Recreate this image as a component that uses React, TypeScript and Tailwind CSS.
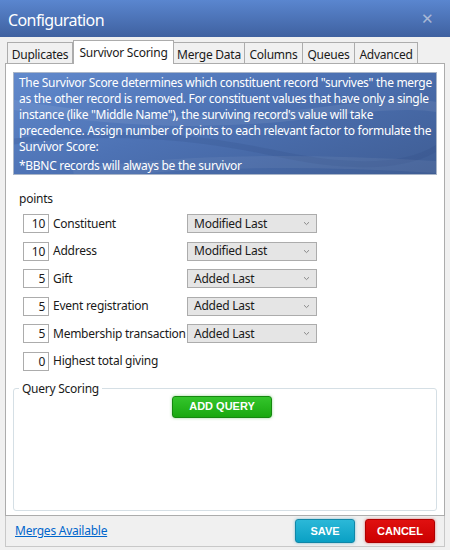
import React from "react";

const ROWS = [
  { pts: "10", label: "Constituent", sel: "Modified Last" },
  { pts: "10", label: "Address", sel: "Modified Last" },
  { pts: "5", label: "Gift", sel: "Added Last" },
  { pts: "5", label: "Event registration", sel: "Added Last" },
  { pts: "5", label: "Membership transaction", sel: "Added Last" },
  { pts: "0", label: "Highest total giving", sel: null },
];

const TABS = [
  { name: "Duplicates", w: "w-[66px]" },
  { name: "Survivor Scoring", w: "w-[101px]", active: true },
  { name: "Merge Data", w: "w-[72px]" },
  { name: "Columns", w: "w-[59px]" },
  { name: "Queues", w: "w-[53px]" },
  { name: "Advanced", w: "w-[64px]" },
];

const INTRO = [
  'The Survivor Score determines which constituent record "survives" the merge',
  "as the other record is removed. For constituent values that have only a single",
  'instance (like "Middle Name"), the surviving record\'s value will take',
  "precedence. Assign number of points to each relevant factor to formulate the",
  "Survivor Score:",
];

function Chevron() {
  return (
    <svg width="7" height="5" viewBox="0 0 7 5" className="text-[#8a8a8a]">
      <path d="M1 1.2 L3.5 3.6 L6 1.2" fill="none" stroke="currentColor" strokeWidth="1" />
    </svg>
  );
}

export default function App() {
  return (
    <div className="w-[450px] h-[550px] bg-[#f0f0f0] flex flex-col text-[12px] tracking-[-0.25px] text-[#1a1a1a] font-['Noto_Sans',sans-serif] overflow-hidden">
      {/* Title bar */}
      <div className="h-[37px] shrink-0 flex items-center justify-between pl-[8px] pr-[16px] bg-[linear-gradient(to_bottom,#5a86cf,#3f61a0)]">
        <span className="text-white text-[16px] tracking-[-0.6px] leading-none pt-[3px]">Configuration</span>
        <span className="text-[#a9b8d6] text-[15px] leading-none">✕</span>
      </div>

      <div className="flex-1 flex flex-col px-[5px]">
        {/* Tabs */}
        <div className="h-[24px] mt-[2px] flex items-end pl-[2px] relative z-10">
          {TABS.map((t) =>
            t.active ? (
              <div
                key={t.name}
                className={`${t.w} h-[24px] -mb-px bg-white border border-b-0 border-[#acacac] flex items-center justify-center pt-[1px]`}
              >
                {t.name}
              </div>
            ) : (
              <div
                key={t.name}
                className={`${t.w} h-[21px] bg-[#f0f0f0] border border-b-0 border-[#acacac] -ml-px first:ml-0 flex items-center justify-center pt-[3px]`}
              >
                {t.name}
              </div>
            )
          )}
        </div>

        {/* Panel */}
        <div className="h-[453px] bg-white border border-[#acacac] flex flex-col px-[7px] pt-[8px]">
          <div className="relative overflow-hidden h-[103px] border border-[#a9b5c8] bg-[linear-gradient(160deg,#6189cc_0%,#4d72b4_45%,#3f5d94_100%)] text-white pl-[5px] pt-[2px] text-[12px] tracking-[-0.3px] leading-[16px] whitespace-nowrap">
            <svg className="absolute inset-0 pointer-events-none" width="424" height="103" viewBox="0 0 424 103">
              <path d="M-10 30 Q 150 60 300 40 T 440 50" fill="none" stroke="#ffffff" strokeOpacity="0.07" strokeWidth="10" />
              <path d="M-10 70 Q 120 50 260 80 T 440 60" fill="none" stroke="#2c4a80" strokeOpacity="0.18" strokeWidth="6" />
              <path d="M60 103 Q 200 80 440 95" fill="none" stroke="#ffffff" strokeOpacity="0.06" strokeWidth="12" />
            </svg>
            <div className="relative">
              {INTRO.map((line) => (
                <div key={line}>{line}</div>
              ))}
            </div>
            <p className="relative mt-[3px]">*BBNC records will always be the survivor</p>
          </div>

          <div className="mt-[18px] ml-[6px] leading-none">points</div>

          <div className="mt-[9px] ml-[10px] flex flex-col gap-[8.5px]">
            {ROWS.map((r) => (
              <div key={r.label} className="h-[19px] flex items-center">
                <div className="w-[26px] h-[19px] border border-[#acacac] bg-white text-right pr-[3px] leading-[17px]">
                  {r.pts}
                </div>
                <div className="w-[138px] pl-[4px] whitespace-nowrap">{r.label}</div>
                {r.sel && (
                  <div className="w-[130px] h-[19px] border border-[#acacac] bg-[#e5e5e5] flex items-center justify-between pl-[6px] pr-[6px]">
                    <span>{r.sel}</span>
                    <Chevron />
                  </div>
                )}
              </div>
            ))}
          </div>

          <fieldset className="mt-[12px] h-[128px] border border-[#d5dfe5] rounded-[3px] px-0">
            <legend className="ml-[5px] px-[3px] leading-none">Query Scoring</legend>
            <button className="ml-[158px] mt-[1px] w-[100px] h-[22px] rounded-[3px] border border-[#15880f] bg-[linear-gradient(to_bottom,#34c52c,#19a80f)] shadow-[0_0_3px_rgba(40,170,30,0.5)] text-white font-bold text-[11px] tracking-normal font-['Liberation_Sans',sans-serif]">
              ADD QUERY
            </button>
          </fieldset>
        </div>

        {/* Footer */}
        <div className="h-[31px] border border-t-0 border-[#c8c8c8] flex items-center justify-between pl-[9px] pr-[9px]">
          <a className="text-[#0066cc] underline text-[12px]">Merges Available</a>
          <div className="flex gap-[10px]">
            <button className="w-[60px] h-[24px] rounded-[3px] border border-[#1187a8] bg-[linear-gradient(to_bottom,#2bb8d8,#0aa0c4)] shadow-[0_0_3px_rgba(10,140,180,0.5)] text-white font-bold text-[11px] tracking-normal font-['Liberation_Sans',sans-serif]">
              SAVE
            </button>
            <button className="w-[70px] h-[24px] rounded-[3px] border border-[#b00000] bg-[linear-gradient(to_bottom,#e01010,#cc0000)] shadow-[0_0_3px_rgba(200,0,0,0.5)] text-white font-bold text-[11px] tracking-normal font-['Liberation_Sans',sans-serif]">
              CANCEL
            </button>
          </div>
        </div>
      </div>
    </div>
  );
}
